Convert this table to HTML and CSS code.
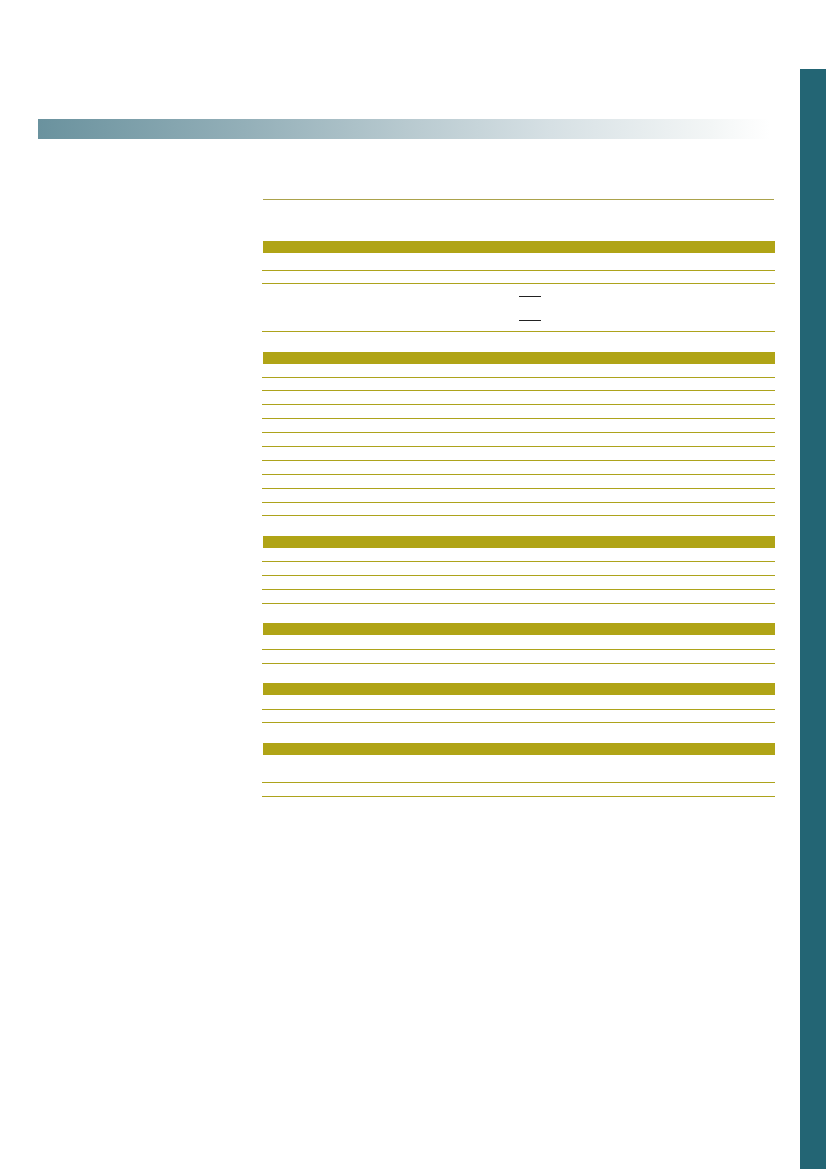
FILE: index.html
```html
<!DOCTYPE html>
<html lang="en">
<head>
<meta charset="utf-8">
<title>Report page</title>
<link rel="stylesheet" href="styles.css">
</head>
<body>
<div class="page">
  <main class="main">
    <div class="banner"></div>
    <section class="content">
      <div class="rule-top"></div>

      <div class="group g1">
        <div class="head"></div>
        <div class="row h17"></div>
        <div class="row h12"></div>
        <div class="row tall">
          <div class="totals">
            <span class="dash"></span>
            <span class="dash"></span>
          </div>
        </div>
      </div>

      <div class="group g2">
        <div class="head"></div>
        <div class="row h13"></div>
        <div class="row h12"></div>
        <div class="row h13"></div>
        <div class="row h13"></div>
        <div class="row h13"></div>
        <div class="row h13"></div>
        <div class="row h13"></div>
        <div class="row h13"></div>
        <div class="row h13"></div>
        <div class="row h13"></div>
        <div class="row h12"></div>
      </div>

      <div class="group g3">
        <div class="head"></div>
        <div class="row h13"></div>
        <div class="row h13"></div>
        <div class="row h13"></div>
        <div class="row h13"></div>
      </div>

      <div class="group g4">
        <div class="head"></div>
        <div class="row h14"></div>
        <div class="row h13"></div>
      </div>

      <div class="group g5">
        <div class="head"></div>
        <div class="row h14"></div>
        <div class="row h12"></div>
      </div>

      <div class="group g6">
        <div class="head"></div>
        <div class="row h27"></div>
        <div class="row h13"></div>
      </div>
    </section>
  </main>
  <aside class="sidebar"></aside>
</div>
</body>
</html>
```

FILE: styles.css
```css
html, body {
  margin: 0;
  padding: 0;
  background: #ffffff;
  font-family: "Liberation Sans", Arial, sans-serif;
}

.page {
  display: flex;
  width: 826px;
  height: 1169px;
  overflow: hidden;
}

.main {
  width: 800px;
  flex: none;
}

.sidebar {
  width: 26px;
  flex: none;
  margin-top: 69px;
  height: 1100px;
  background: #236574;
}

.banner {
  margin: 119px 0 0 38px;
  width: 732px;
  height: 20px;
  background: linear-gradient(to right, #6a929e 0%, #93afb8 28%, #b7c9cf 50%, #d6e0e4 70%, #f3f6f6 92%, #ffffff 100%);
}

.content {
  margin: 60px 0 0 262px;
  width: 513px;
}

.rule-top {
  margin-left: 1px;
  width: 511px;
  height: 1px;
  background: #aba24c;
}

.group {
  display: flex;
  flex-direction: column;
}

.g1 { margin-top: 41px; }
.g2 { margin-top: 20px; }
.g3 { margin-top: 20px; }
.g4 { margin-top: 19px; }
.g5 { margin-top: 19px; }
.g6 { margin-top: 20px; }

.head {
  margin-left: 1px;
  height: 12px;
  background: #b0a416;
}

.row {
  border-bottom: 1px solid #ada31c;
}

.h12 { height: 12px; }
.h13 { height: 13px; }
.h14 { height: 14px; }
.h17 { height: 17px; }
.h27 { height: 27px; }

.tall {
  height: 47px;
}

.totals {
  display: flex;
  flex-direction: column;
  gap: 23px;
  padding: 12px 0 0 257px;
}

.dash {
  display: block;
  width: 22px;
  height: 1px;
  background: #222222;
}
```
